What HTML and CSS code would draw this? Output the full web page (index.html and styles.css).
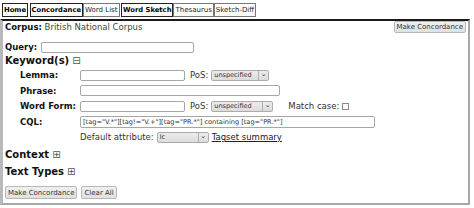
FILE: index.html
```html
<!DOCTYPE html>
<html>
<head>
<meta charset="utf-8">
<link rel="stylesheet" href="styles.css">
</head>
<body>
<div class="tabs">
  <a class="tab strong">Home</a>
  <div class="tabgroup">
    <a class="tab strong">Concordance</a>
    <a class="tab">Word List</a>
  </div>
  <div class="tabgroup">
    <a class="tab strong">Word Sketch</a>
    <a class="tab">Thesaurus</a>
    <a class="tab">Sketch-Diff</a>
  </div>
</div>
<div class="box">
  <div class="top">
    <div class="top-left">
      <div class="corpus"><b>Corpus:</b> <span class="cname">British National Corpus</span></div>
      <div class="query"><b>Query:</b> <input class="inp q-inp" type="text"></div>
    </div>
    <button class="btn top-btn">Make Concordance</button>
  </div>

  <div class="section">Keyword(s) <span class="toggle">⊟</span></div>
  <div class="rows">
    <div class="row">
      <span class="lab">Lemma:</span>
      <input class="inp w-short" type="text">
      <span class="txt pos">PoS:</span>
      <span class="sel w-sel1"><span class="val">unspecified</span><span class="arr">⌄</span></span>
    </div>
    <div class="row">
      <span class="lab">Phrase:</span>
      <input class="inp w-phrase" type="text">
    </div>
    <div class="row">
      <span class="lab">Word Form:</span>
      <input class="inp w-short" type="text">
      <span class="txt pos">PoS:</span>
      <span class="sel w-sel2"><span class="val">unspecified</span><span class="arr">⌄</span></span>
      <span class="txt match">Match case: <span class="chk"></span></span>
    </div>
    <div class="row">
      <span class="lab">CQL:</span>
      <input class="inp w-cql" type="text" value='[tag="V.*"][tag!="V.+"][tag="PR.*"] containing [tag="PR.*"]'>
    </div>
    <div class="row">
      <span class="lab"></span>
      <span class="txt">Default attribute:</span>
      <span class="sel w-sel3"><span class="val">lc</span><span class="arr">⌄</span></span>
      <a class="txt link">Tagset summary</a>
    </div>
  </div>

  <div class="section context">Context <span class="toggle">⊞</span></div>
  <div class="section ttypes">Text Types <span class="toggle">⊞</span></div>

  <div class="bottom">
    <button class="btn">Make Concordance</button>
    <button class="btn">Clear All</button>
  </div>
</div>
</body>
</html>
```

FILE: styles.css
```css
html, body {
  margin: 0;
  padding: 0;
  background: #fff;
}
body {
  font-family: "DejaVu Sans", Verdana, sans-serif;
  color: #111;
  width: 474px;
  height: 208px;
  overflow: hidden;
}
.tabs {
  display: flex;
  align-items: stretch;
  gap: 1.5px;
  padding: 3px 0 0 2px;
  height: 14px;
}
.tabgroup {
  display: flex;
}
.tab {
  display: flex;
  align-items: center;
  font-size: 7px;
  color: #222;
  border: 1px solid #777;
  padding: 0 1px;
  background: #fff;
  text-decoration: none;
}
.tab.strong {
  font-weight: bold;
  font-size: 6.8px;
  color: #000;
  border-color: #222;
}
.box {
  margin-top: 2px;
  box-sizing: border-box;
  width: 470px;
  height: 186px;
  border-top: 2px solid #1a1a1a;
  border-left: 3px solid #b9b9b9;
  border-right: 2px solid #a8a8a8;
  border-bottom: 2px solid #a8a8a8;
  padding: 0 2px 0 2px;
}
.top {
  display: flex;
  justify-content: space-between;
  align-items: flex-start;
}
.corpus {
  font-size: 8.5px;
  line-height: 10px;
  height: 10px;
  margin-top: 1px;
}
.cname {
  color: #3d4a3a;
}
.query {
  margin-top: 9px;
  display: flex;
  align-items: center;
  gap: 4px;
  font-size: 8.5px;
  height: 12px;
}
.q-inp {
  width: 153px;
}
.top-btn {
  margin-top: 11px;
}
.inp {
  box-sizing: border-box;
  height: 11px;
  border: 1px solid #a6a6a6;
  border-radius: 2px;
  background: #fff;
  padding: 0 2px;
  margin: 0;
  font-family: "DejaVu Sans", sans-serif;
  font-size: 6.6px;
  color: #333;
  outline: none;
}
.btn {
  box-sizing: border-box;
  height: 12px;
  padding: 0 2px;
  margin: 0;
  border: 1px solid #b8b8b8;
  border-radius: 2px;
  background: linear-gradient(#f0f0f0, #e0e0e0);
  font-family: "DejaVu Sans", sans-serif;
  font-size: 7px;
  color: #333;
  line-height: 10px;
  white-space: nowrap;
}
.section {
  font-size: 10px;
  font-weight: bold;
  line-height: 12px;
  height: 12px;
  margin-top: 2px;
  display: flex;
  align-items: center;
  gap: 3px;
}
.toggle {
  font-weight: normal;
  font-size: 10px;
  color: #555;
}
.rows {
  display: flex;
  flex-direction: column;
  gap: 3.5px;
  margin-top: 2px;
  padding-left: 15px;
}
.row {
  display: flex;
  align-items: center;
  height: 12px;
}
.lab {
  width: 60px;
  font-size: 8.5px;
  font-weight: bold;
}
.txt {
  font-size: 8.5px;
  color: #333;
}
.pos {
  margin-left: 5px;
  margin-right: 3px;
}
.w-short { width: 105px; }
.w-phrase { width: 200px; }
.w-cql { width: 295px; height: 12px; }
.sel {
  box-sizing: border-box;
  display: flex;
  align-items: stretch;
  height: 11px;
  border: 1px solid #ababab;
  border-radius: 2px;
  background: linear-gradient(#ececec, #dcdcdc);
  font-size: 6.5px;
  color: #333;
}
.sel .val {
  flex: 1;
  display: flex;
  align-items: center;
  padding-left: 2px;
}
.sel .arr {
  width: 10px;
  border-left: 1px solid #b0b0b0;
  display: flex;
  align-items: center;
  justify-content: center;
  font-size: 7px;
  line-height: 7px;
  padding-bottom: 2px;
  box-sizing: border-box;
}
.w-sel1 { width: 58px; }
.w-sel2 { width: 62px; }
.w-sel3 { width: 52px; margin-left: 3px; }
.match {
  margin-left: 15px;
  display: flex;
  align-items: center;
  gap: 3px;
}
.chk {
  display: inline-block;
  width: 5px;
  height: 5px;
  border: 1px solid #888;
  background: #fff;
}
.link {
  text-decoration: underline;
  margin-left: 3px;
  color: #222;
}
.context {
  margin-top: 6px;
}
.ttypes {
  margin-top: 5px;
}
.bottom {
  display: flex;
  gap: 4px;
  margin-top: 8px;
}
.bottom .btn {
  height: 13px;
}
```
